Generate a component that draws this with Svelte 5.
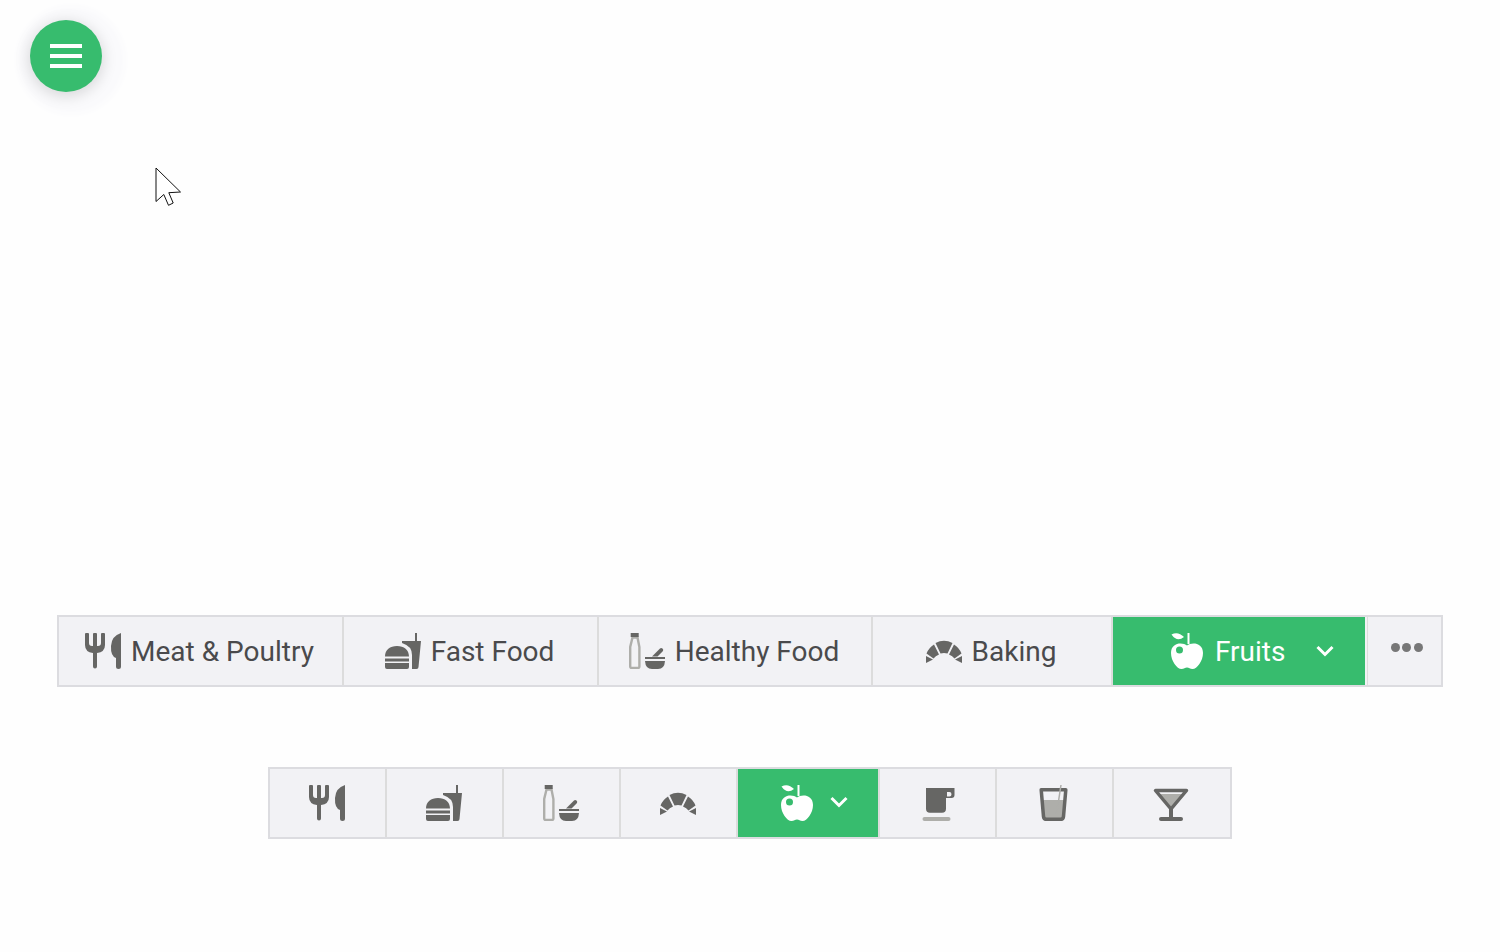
<script>
	const wide = [
		{ id: 'meat', label: 'Meat & Poultry', width: 285 },
		{ id: 'fast', label: 'Fast Food', width: 255 },
		{ id: 'healthy', label: 'Healthy Food', width: 274 },
		{ id: 'baking', label: 'Baking', width: 240 },
		{ id: 'fruits', label: 'Fruits', width: 254, active: true }
	];

	const compact = [
		{ id: 'meat', width: 117 },
		{ id: 'fast', width: 117 },
		{ id: 'healthy', width: 117 },
		{ id: 'baking', width: 117 },
		{ id: 'fruits', width: 142, active: true },
		{ id: 'coffee', width: 117 },
		{ id: 'juice', width: 117 },
		{ id: 'cocktail', width: 116 }
	];
</script>

{#snippet icon(id)}
	<svg class="icon" viewBox="0 0 36 36" aria-hidden="true">
		{#if id === 'meat'}
			<path class="dark" d="M0 1q0-1 1-1h2q1 0 1 1v9q0 3 3 3h1V1q0-1 1-1h2q1 0 1 1v12h1q3 0 3-3V1q0-1 1-1h2q1 0 1 1v11q0 7-8 8v13.500a2 2 0 0 1-4 0V20Q0 19 0 12Z" />
			<path class="dark" d="M36 0v33.500a2.500 2.500 0 0 1-5 0V25Q25.500 23 26 13 26.500 3 36 0Z" />
		{:else if id === 'fast'}
			<path class="dark" d="M0 23.500C0 17 5 13 12 13s12 4 12 10.500ZM0 25.500h24v3H0ZM0 30h24v4a2 2 0 0 1-2 2H2a2 2 0 0 1-2-2Z" />
			<path class="dark" d="M17 8h13V0h2v8h4l-2.500 26a2 2 0 0 1-2 2H27V22q0-9-10-12Z" />
		{:else if id === 'healthy'}
			<path class="light-line" d="M3.500 4.500 1.200 14v19.500q0 1.500 1.500 1.500h6.200q1.500 0 1.500-1.500V14L8.500 4.500Z" />
			<rect class="dark" x="1.700" y="0" width="8" height="4" />
			<path class="dark" d="M23 23.500 31 15.500a2 2 0 0 1 3 2.500l-5.500 5.500ZM16 24h20v2H16ZM16 28h20q-.5 8-7 8h-6q-6.500 0-7-8Z" />
		{:else if id === 'baking'}
			<path class="dark" d="M9.500 10Q18 5.500 26.500 10L21.500 20.500Q18 19.500 14.500 20.500ZM8 11.500 13 21.500Q9.500 23 7.500 25.500L.5 20.500Q3 14.500 8 11.500ZM28 11.500 23 21.500Q26.500 23 28.500 25.500L35.500 20.500Q33 14.500 28 11.500ZM0 23 7 26.500 0 30ZM36 23 29 26.500 36 30Z" />
		{:else if id === 'fruits'}
			<path class="white" fill-rule="evenodd" d="M18 12.500C22 9 34 9 34 20c0 8-6 16-10.500 16-2.500 0-3.500-1.500-5.500-1.500S15 36 12.500 36C8 36 2 28 2 20 2 9 14 9 18 12.500ZM10.500 13.500a3.500 3.500 0 1 0 0 7 3.500 3.500 0 0 0 0-7Z" />
			<path class="white" d="M2.500 1.500Q9-2 15 4 8 9.500 2.500 1.500Z" />
			<rect class="white" x="18.500" y="0" width="2" height="11" />
		{:else if id === 'coffee'}
			<path class="dark" fill-rule="evenodd" d="M7 3h28.500v7q0 3-3 3H27v10.700q0 4-4 4H11q-4 0-4-4ZM28 7v4.500h2.500q2 0 2-2.250T30.500 7Z" />
			<rect class="light" x="3.500" y="32" width="28" height="4" rx="2" />
		{:else if id === 'juice'}
			<path class="light" d="M6 15h23l-2 19H8Z" />
			<path class="dark-line" d="M5.200 4.800h24.600L27.500 31.500q-.3 2.800-3 2.800h-14q-2.700 0-3-2.800Z" />
			<path class="straw" d="M25 0 20.500 29" />
		{:else if id === 'cocktail'}
			<path class="light" d="M5 9h26L18 24Z" />
			<path class="dark-line" d="M2.500 5.500h31L18 24Z" />
			<rect class="dark" x="16" y="23" width="4" height="11" />
			<rect class="dark" x="6" y="32" width="24" height="4" rx="2" />
		{/if}
	</svg>
{/snippet}

{#snippet chevron()}
	<svg class="chevron" viewBox="0 0 18 12" aria-hidden="true">
		<path d="M1.500 2 9 9.500 16.500 2" />
	</svg>
{/snippet}

<button class="fab" aria-label="Menu">
	<span></span>
	<span></span>
	<span></span>
</button>

<svg class="cursor" viewBox="0 0 28 40" aria-hidden="true">
	<path d="M1 1 25.500 25 13.800 25.700 18.200 36 13.500 38.300 8.800 27.500 1 34.500Z" />
</svg>

<main class="page">
	<nav class="bar">
		{#each wide as item}
			<a class="item" class:active={item.active} style:width="{item.width}px">
				{@render icon(item.id)}
				<span class="label">{item.label}</span>
				{#if item.active}
					{@render chevron()}
				{/if}
			</a>
		{/each}
		<a class="item more" aria-label="More">
			<i></i><i></i><i></i>
		</a>
	</nav>

	<nav class="bar small">
		{#each compact as item}
			<a class="item" class:active={item.active} style:width="{item.width}px">
				{@render icon(item.id)}
				{#if item.active}
					{@render chevron()}
				{/if}
			</a>
		{/each}
	</nav>
</main>

<style>
	:global(body) {
		background: #fefefe;
	}

	.page {
		display: flex;
		flex-direction: column;
		align-items: center;
		gap: 80px;
		height: 952px;
		padding-top: 615px;
		box-sizing: border-box;
		font-family: Roboto, sans-serif;
	}

	.fab {
		position: absolute;
		left: 30px;
		top: 20px;
		width: 72px;
		height: 72px;
		padding: 0;
		border: 0;
		border-radius: 50%;
		background: #37bc6e;
		box-shadow: 0 3px 14px 2px rgba(0, 0, 0, 0.13), 5px 4px 6px 18px #fafafc;
		display: flex;
		flex-direction: column;
		align-items: center;
		justify-content: center;
		gap: 6px;
	}

	.fab span {
		width: 32px;
		height: 4px;
		background: #fff;
	}

	.cursor {
		position: absolute;
		left: 154.500px;
		top: 167px;
		width: 28px;
		height: 40px;
	}

	.cursor path {
		fill: #fff;
		stroke: #111;
		stroke-width: 1;
	}

	.bar {
		display: flex;
		height: 72px;
		box-sizing: border-box;
		border: 2px solid #dcdce0;
		background: #f2f2f5;
	}

	.item {
		display: flex;
		align-items: center;
		justify-content: center;
		gap: 10px;
		box-sizing: border-box;
		padding-right: 2px;
		border-right: 2px solid #dcdcdc;
		color: #4a4a4c;
	}

	.bar .item:last-child {
		border-right: 0;
	}

	.label {
		margin-top: 2px;
		font-size: 28px;
		line-height: 36px;
	}

	.item.active {
		justify-content: flex-start;
		padding: 0 0 0 56px;
		background: #37bc6e;
		color: #fff;
		background-clip: padding-box;
		border-right-color: #f2f2f5;
	}

	.icon {
		display: block;
		width: 36px;
		height: 36px;
		flex: none;
	}

	.dark {
		fill: #666664;
	}

	.light {
		fill: #aeaeaa;
	}

	.white {
		fill: #fff;
	}

	.light-line {
		fill: none;
		stroke: #aeaeaa;
		stroke-width: 2.400;
	}

	.dark-line {
		fill: none;
		stroke: #666664;
		stroke-width: 3.500;
		stroke-linejoin: round;
	}

	.straw {
		fill: none;
		stroke: #aeaeaa;
		stroke-width: 1.500;
	}

	.chevron {
		width: 18px;
		height: 12px;
		margin-left: 21px;
		flex: none;
	}

	.chevron path {
		fill: none;
		stroke: #fff;
		stroke-width: 3;
	}

	.more {
		width: 74px;
		padding: 0 0 7px 4px;
		gap: 2.500px;
		border-left: 1px solid #dcdcdc;
	}

	.more i {
		width: 9px;
		height: 9px;
		border-radius: 50%;
		background: #777;
	}

	.small .item.active {
		gap: 0;
		padding-left: 41px;
		border-right-color: #dcdcdc;
	}

	.small .chevron {
		margin-left: 15px;
		margin-top: -2px;
	}
</style>
